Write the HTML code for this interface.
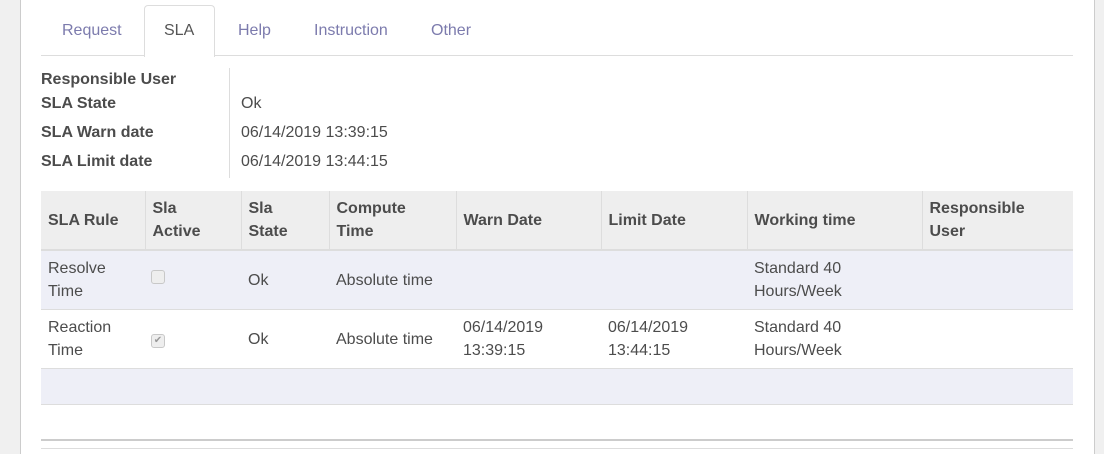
<!DOCTYPE html>
<html style="overflow:hidden;height:454px"><head><style>
body{margin:0;width:1104px;height:454px;overflow:hidden;background:#f0f0f0;font-family:"Liberation Sans",sans-serif;color:#4c4c4c;font-size:16px;position:relative}
.sheet{position:absolute;left:20px;top:0;width:1073px;height:454px;background:#fff;border-left:1px solid #ccc;border-right:1px solid #ccc}
.abs{position:absolute}
.tab{position:absolute;top:22px;color:#7c7bad}
.lbl{position:absolute;left:41px;font-weight:bold}
.val{position:absolute;left:241px}
table{position:absolute;left:41px;top:191px;width:1032px;border-collapse:collapse;table-layout:fixed}
th{background:#eee;text-align:left;font-weight:bold;vertical-align:middle;padding:0 7px;height:58px;border-left:1px solid #ddd;border-bottom:2px solid #ddd;line-height:23px}
th:first-child{border-left:none}
td{padding:0 7px;vertical-align:middle;line-height:23px;height:58px;border-bottom:1px solid #ddd}
tr.odd td{background:#eeeff7}
.cb{display:inline-block;width:12px;height:12px;border:1px solid #c8c8c8;border-radius:3px;background:#eee;margin-left:-1px;position:relative;top:-1px;font-size:10px;line-height:12px;text-align:center;color:#999}
</style></head><body>
<div class="sheet"></div>
<div class="abs" style="left:41px;top:55px;width:1032px;height:1px;background:#ddd"></div>
<div class="abs" style="left:144px;top:5px;width:69px;height:51px;background:#fff;border:1px solid #ddd;border-bottom:none;border-radius:4px 4px 0 0"></div>
<div class="tab" style="left:62px">Request</div>
<div class="tab" style="left:164px;color:#555">SLA</div>
<div class="tab" style="left:238px">Help</div>
<div class="tab" style="left:314px">Instruction</div>
<div class="tab" style="left:431px">Other</div>
<div class="abs" style="left:229px;top:68px;width:1px;height:110px;background:#ddd"></div>
<div class="lbl" style="top:71px">Responsible User</div>
<div class="lbl" style="top:95px">SLA State</div><div class="val" style="top:95px">Ok</div>
<div class="lbl" style="top:124px">SLA Warn date</div><div class="val" style="top:124px">06/14/2019 13:39:15</div>
<div class="lbl" style="top:153px">SLA Limit date</div><div class="val" style="top:153px">06/14/2019 13:44:15</div>
<table>
<colgroup><col style="width:104px"><col style="width:96px"><col style="width:88px"><col style="width:127px"><col style="width:145px"><col style="width:146px"><col style="width:175px"><col style="width:151px"></colgroup>
<tr><th>SLA Rule</th><th>Sla<br>Active</th><th>Sla<br>State</th><th>Compute<br>Time</th><th>Warn Date</th><th>Limit Date</th><th>Working time</th><th>Responsible<br>User</th></tr>
<tr class="odd"><td>Resolve<br>Time</td><td><span class="cb"></span></td><td>Ok</td><td>Absolute time</td><td></td><td></td><td>Standard 40<br>Hours/Week</td><td></td></tr>
<tr><td>Reaction<br>Time</td><td><span class="cb">✔</span></td><td>Ok</td><td>Absolute time</td><td>06/14/2019<br>13:39:15</td><td>06/14/2019<br>13:44:15</td><td>Standard 40<br>Hours/Week</td><td></td></tr>
<tr class="odd"><td colspan="8" style="height:35px"></td></tr>
</table>
<div class="abs" style="left:41px;top:439px;width:1032px;height:2px;background:#ccc"></div>
<div class="abs" style="left:41px;top:448px;width:1032px;height:1px;background:#ddd"></div>
</body></html>
